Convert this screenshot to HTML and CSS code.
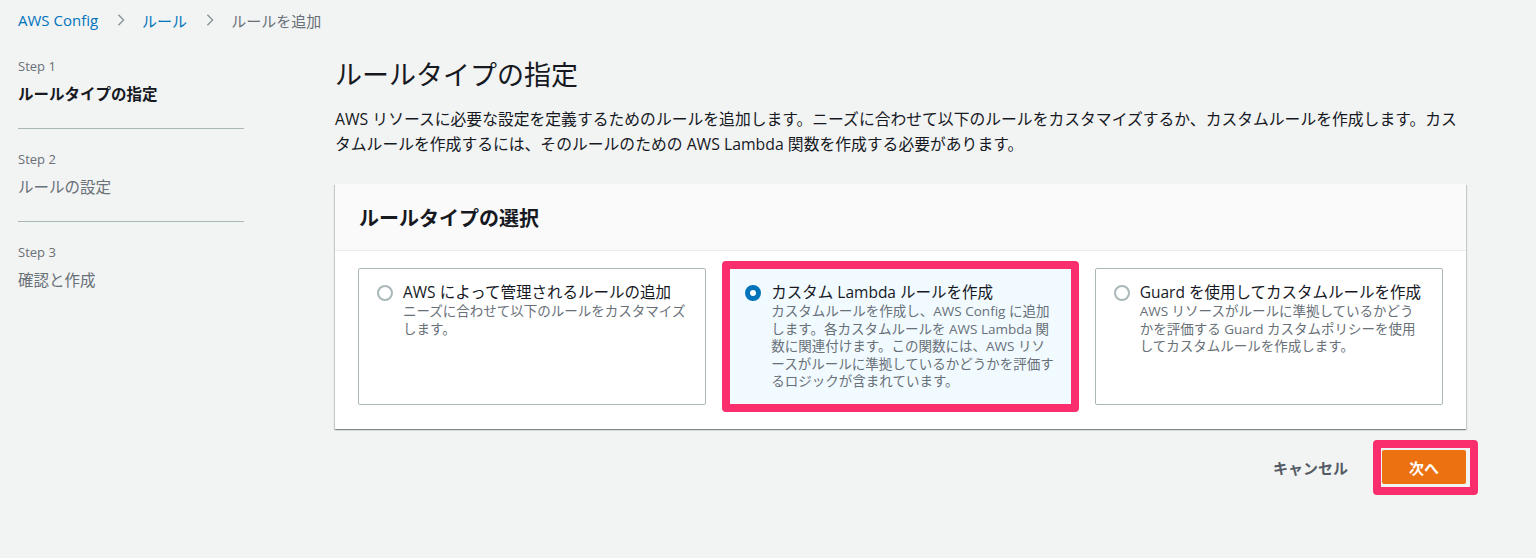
FILE: index.html
```html
<!DOCTYPE html>
<html lang="ja">
<head>
<meta charset="utf-8">
<title>ルールを追加</title>
<link rel="stylesheet" href="styles.css">
</head>
<body>
<nav class="breadcrumb">
  <a class="crumb-link">AWS Config</a>
  <svg class="chev" viewBox="0 0 16 16" width="14" height="14"><path d="M5 2l6 6-6 6" fill="none" stroke="#879596" stroke-width="1.6"/></svg>
  <a class="crumb-link">ルール</a>
  <svg class="chev" viewBox="0 0 16 16" width="14" height="14"><path d="M5 2l6 6-6 6" fill="none" stroke="#879596" stroke-width="1.6"/></svg>
  <span class="crumb-current">ルールを追加</span>
</nav>
<div class="layout">
  <aside class="steps">
    <div class="step">
      <div class="step-label">Step 1</div>
      <div class="step-title active">ルールタイプの指定</div>
    </div>
    <div class="step">
      <div class="step-label">Step 2</div>
      <div class="step-title">ルールの設定</div>
    </div>
    <div class="step last">
      <div class="step-label">Step 3</div>
      <div class="step-title">確認と作成</div>
    </div>
  </aside>
  <main class="main">
    <h1 class="page-title">ルールタイプの指定</h1>
    <p class="intro">AWS リソースに必要な設定を定義するためのルールを追加します。ニーズに合わせて以下のルールをカスタマイズするか、カスタムルールを作成します。カスタムルールを作成するには、そのルールのための AWS Lambda 関数を作成する必要があります。</p>
    <section class="card">
      <header class="card-header"><h2 class="card-title">ルールタイプの選択</h2></header>
      <div class="card-body">
        <div class="tiles">
          <div class="tile">
            <span class="radio"></span>
            <div class="tile-text">
              <div class="tile-title">AWS によって管理されるルールの追加</div>
              <div class="tile-desc">ニーズに合わせて以下のルールをカスタマイズします。</div>
            </div>
          </div>
          <div class="tile selected">
            <span class="radio checked"></span>
            <div class="tile-text">
              <div class="tile-title">カスタム Lambda ルールを作成</div>
              <div class="tile-desc">カスタムルールを作成し、AWS Config に追加します。各カスタムルールを AWS Lambda 関数に関連付けます。この関数には、AWS リソースがルールに準拠しているかどうかを評価するロジックが含まれています。</div>
            </div>
            <span class="highlight"></span>
          </div>
          <div class="tile">
            <span class="radio"></span>
            <div class="tile-text">
              <div class="tile-title">Guard を使用してカスタムルールを作成</div>
              <div class="tile-desc">AWS リソースがルールに準拠しているかどうかを評価する Guard カスタムポリシーを使用してカスタムルールを作成します。</div>
            </div>
          </div>
        </div>
      </div>
    </section>
    <div class="actions">
      <button class="btn-link">キャンセル</button>
      <div class="next-wrap">
        <button class="btn-primary">次へ</button>
        <span class="highlight btn-hl"></span>
      </div>
    </div>
  </main>
</div>
</body>
</html>
```

FILE: styles.css
```css
* { box-sizing: border-box; }
html, body { min-height: 100%; }
body {
  margin: 0;
  background: #f2f3f3;
  font-family: "Open Sans", "Noto Sans CJK JP", sans-serif;
  color: #16191f;
}
.breadcrumb {
  display: flex;
  align-items: center;
  height: 40px;
  padding: 0 18px;
  font-size: 15px;
}
.crumb-link { color: #0073bb; }
.crumb-current { color: #687078; }
.chev { margin: 0 14px 0 16px; }

.layout {
  display: flex;
  gap: 91px;
  padding: 17px 0 60px 18px;
}
.steps { width: 226px; flex: none; }
.step {
  border-bottom: 1px solid #aab7b8;
  padding-bottom: 23px;
  margin-bottom: 21px;
}
.step.last { border-bottom: none; }
.step-label {
  font-size: 13px;
  line-height: 18px;
  color: #687078;
  margin-bottom: 8px;
}
.step-title {
  font-size: 15.5px;
  line-height: 22px;
  color: #687078;
}
.step-title.active { color: #16191f; font-weight: 700; }

.main { width: 1131px; flex: none; }
.page-title {
  margin: 0;
  font-size: 27px;
  line-height: 36px;
  font-weight: 400;
}
.intro {
  margin: 14px 0 27px;
  font-size: 15.8px;
  line-height: 25px;
}
.card {
  background: #fff;
  box-shadow: 0 1px 1px 0 rgba(0,28,36,.3), 1px 1px 1px 0 rgba(0,28,36,.15), -1px 1px 1px 0 rgba(0,28,36,.15);
}
.card-header {
  background: #fafafa;
  border-bottom: 1px solid #eaeded;
  height: 67px;
  display: flex;
  align-items: center;
  padding: 0 24px;
}
.card-title { margin: 0; font-size: 20px; font-weight: 700; }
.card-body { padding: 17px 23px 24px; }
.tiles {
  display: grid;
  grid-template-columns: repeat(3, 1fr);
  gap: 20px;
}
.tile {
  position: relative;
  height: 137px;
  border: 1px solid #aab7b8;
  border-radius: 2px;
  padding: 12px 16px 0 18px;
  display: flex;
  gap: 10px;
}
.tile.selected { background: #f1faff; border-color: #0073bb; }
.radio {
  flex: none;
  width: 16px;
  height: 16px;
  margin-top: 4px;
  border-radius: 50%;
  border: 2px solid #aab7b8;
  background: #fff;
}
.radio.checked { border: 5px solid #0073bb; }
.tile-title { font-size: 15.5px; line-height: 22px; }
.tile-desc { font-size: 13.5px; line-height: 17.5px; color: #687078; }
.highlight {
  position: absolute;
  top: -8px; bottom: -8px; left: -5px; right: -5px;
  border: 8px solid #fb2e6d;
  border-radius: 4px;
  pointer-events: none;
}
.actions {
  display: flex;
  justify-content: flex-end;
  align-items: center;
  gap: 34px;
  margin-top: 21px;
}
.btn-link {
  border: none;
  background: none;
  font: inherit;
  font-size: 15px;
  font-weight: 700;
  color: #545b64;
  padding: 0;
}
.next-wrap { position: relative; }
.btn-primary {
  display: block;
  border: none;
  background: #ec7211;
  color: #fff;
  font: inherit;
  font-size: 15px;
  font-weight: 700;
  width: 84px;
  height: 34px;
  border-radius: 2px;
}
.btn-hl { top: -10px; bottom: -11px; left: -9px; right: -12px; border-radius: 4px; }
```
